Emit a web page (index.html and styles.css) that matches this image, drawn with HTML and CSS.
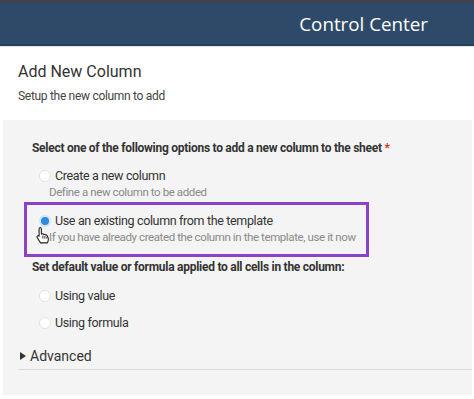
FILE: index.html
```html
<!DOCTYPE html>
<html lang="en">
<head>
  <meta charset="UTF-8" />
  <meta name="viewport" content="width=device-width, initial-scale=1.0" />
  <title>Add New Column</title>
  <link rel="stylesheet" href="styles.css">
</head>
<body>
<div class="topbar">
  <div class="brand">Control Center</div>
</div>
<div class="intro">
  <h1>Add New Column</h1>
  <p>Setup the new column to add</p>
</div>
<div class="panel">
  <div class="label">Select one of the following options to add a new column to the sheet <span class="req">*</span></div>

  <div class="option">
    <div class="row"><span class="radio"></span>Create a new column</div>
    <div class="hint">Define a new column to be added</div>
  </div>

  <div class="option selected">
    <div class="row"><span class="radio checked"></span>Use an existing column from the template</div>
    <div class="hint">If you have already created the column in the template, use it now</div>
    <svg class="cursor" width="16" height="18" viewBox="0 0 16 18">
      <path d="M5 1.5c.8 0 1.4.6 1.4 1.4v5.2l.2-.1c.7-.4 1.6-.2 2 .5.6-.3 1.4-.1 1.8.5.6-.3 1.5 0 1.8.7l.9 2.1c.4 1 .4 2.1 0 3.1l-.9 2H5.6L2.3 11.8c-.5-.6-.4-1.5.2-1.9.6-.4 1.3-.3 1.7.2l-.1.1V2.9c0-.8.5-1.4 1.3-1.4z" fill="#fff" stroke="#222" stroke-width="1.1" stroke-linejoin="round"/>
      <path d="M7.9 9.6v3M9.9 10v2.6M11.8 10.6v2" stroke="#222" stroke-width="0.9"/>
    </svg>
  </div>

  <div class="label second">Set default value or formula applied to all cells in the column:</div>

  <div class="option plain">
    <div class="row"><span class="radio"></span>Using value</div>
  </div>
  <div class="option plain next">
    <div class="row"><span class="radio"></span>Using formula</div>
  </div>

  <div class="advanced"><span class="caret"></span>Advanced</div>
</div>
</body>
</html>
```

FILE: styles.css
```css
* { margin: 0; padding: 0; box-sizing: border-box; }
body {
  font-family: Roboto, "Liberation Sans", sans-serif;
  background: #fff;
  color: #333;
}
.topbar {
  height: 47px;
  background: #2f4a69;
  border-top: 3px solid #3e4550;
  border-bottom: 1px solid #dbe5ef;
  box-shadow: inset 0 -2px 0 #293f59;
  display: flex;
  align-items: center;
  justify-content: flex-end;
  padding: 0 46px 2px 0;
}
.brand {
  font-family: "Open Sans", "Liberation Sans", sans-serif;
  font-size: 18.8px;
  color: #fff;
}
.intro { padding: 15px 18px 16px; }
.intro h1 {
  font-size: 16px;
  font-weight: 400;
  line-height: 20px;
  color: #333;
}
.intro p {
  font-size: 12px;
  letter-spacing: -0.3px;
  line-height: 16px;
  margin-top: 6px;
  color: #444;
}
.panel {
  margin: 0 2px 0 3px;
  background: #f4f4f4;
  padding: 20px 0 25px 29px;
  min-height: 275px;
}
.label {
  font-size: 12px;
  letter-spacing: -0.27px;
  font-weight: 700;
  line-height: 16px;
  color: #333;
}
.label.second { margin-top: 2px; }
.req { color: #d9302c; }
.option {
  margin-top: 11px;
  padding-left: 7px;
}
.row {
  display: flex;
  align-items: center;
  font-size: 12.5px;
  letter-spacing: -0.35px;
  line-height: 18px;
  color: #333;
}
.radio {
  width: 12px;
  height: 12px;
  border-radius: 50%;
  background: #fff;
  border: 1px solid #e2e2e2;
  margin-right: 4px;
  flex-shrink: 0;
}
.radio.checked {
  background: #2b8ddb;
  border: 2px solid #d4e6f6;
}
.hint {
  font-size: 11.5px;
  letter-spacing: -0.4px;
  line-height: 16px;
  color: #8a8a8a;
  margin: -1px 0 0 10px;
}
.option.selected {
  position: relative;
  margin: 2px 0 0 -8px;
  width: 345px;
  border: 3px solid #8a42c9;
  padding: 7px 0 9px 12px;
}
.cursor {
  position: absolute;
  left: 8px;
  top: 21px;
}
.option.plain { margin-top: 12px; }
.option.plain.next { margin-top: 9px; }
.advanced {
  margin: 14px 0 0 -14px;
  padding: 0 0 3px 2px;
  border-bottom: 1px solid #dcdcdc;
  font-size: 14px;
  line-height: 20px;
  color: #333;
  display: flex;
  align-items: center;
}
.caret {
  width: 0;
  height: 0;
  border-left: 6px solid #333;
  border-top: 4px solid transparent;
  border-bottom: 4px solid transparent;
  margin-right: 4px;
}
```
